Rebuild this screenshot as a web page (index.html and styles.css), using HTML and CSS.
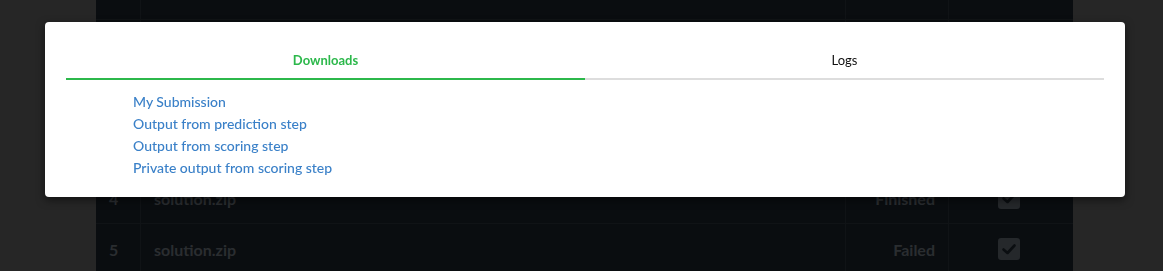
FILE: index.html
```html
<!DOCTYPE html>
<html>
<head>
<meta charset="utf-8">
<link rel="stylesheet" href="styles.css">
</head>
<body>
<div class="backdrop">
  <div class="table">
    <div class="row"><div class="c num"></div><div class="c name"></div><div class="c status"></div><div class="c chk"></div></div>
    <div class="row"><div class="c num">1</div><div class="c name">solution.zip</div><div class="c status">Finished</div><div class="c chk"><span class="box"></span></div></div>
    <div class="row"><div class="c num">2</div><div class="c name">solution.zip</div><div class="c status">Finished</div><div class="c chk"><span class="box"></span></div></div>
    <div class="row"><div class="c num">3</div><div class="c name">solution.zip</div><div class="c status">Finished</div><div class="c chk"><span class="box"></span></div></div>
    <div class="row"><div class="c num">4</div><div class="c name">solution.zip</div><div class="c status">Finished</div><div class="c chk"><span class="box"><svg viewBox="0 0 22 22" width="22" height="22"><path d="M5.5 11.5 L9.5 15 L16.5 7.5" fill="none" stroke="#0b0e11" stroke-width="2.6" stroke-linecap="round" stroke-linejoin="round"/></svg></span></div></div>
    <div class="row"><div class="c num">5</div><div class="c name">solution.zip</div><div class="c status">Failed</div><div class="c chk"><span class="box"><svg viewBox="0 0 22 22" width="22" height="22"><path d="M5.5 11.5 L9.5 15 L16.5 7.5" fill="none" stroke="#0b0e11" stroke-width="2.6" stroke-linecap="round" stroke-linejoin="round"/></svg></span></div></div>
  </div>
</div>
<div class="modal">
  <div class="tabs">
    <div class="tab active">Downloads</div>
    <div class="tab">Logs</div>
  </div>
  <ul class="links">
    <li><a href="#">My Submission</a></li>
    <li><a href="#">Output from prediction step</a></li>
    <li><a href="#">Output from scoring step</a></li>
    <li><a href="#">Private output from scoring step</a></li>
  </ul>
</div>
</body>
</html>
```
FILE: styles.css
```css
html, body {
  margin: 0;
  padding: 0;
  height: 100%;
  overflow: hidden;
  background: #262626;
  font-family: Lato, "Noto Sans", sans-serif;
}
.backdrop {
  display: flow-root;
  width: 977px;
  margin: 0 0 0 96px;
  background: #0a0d10;
  height: 100%;
}
.table {
  display: flex;
  flex-direction: column;
  margin-top: -32px;
}
.row {
  display: grid;
  grid-template-columns: 44px 705px 103px 125px;
  height: 51px;
  flex: none;
  border-top: 1px solid #101316;
  box-sizing: border-box;
  color: #2a2d30;
  font-weight: 700;
  font-size: 16px;
}
.c {
  display: flex;
  align-items: center;
  border-left: 1px solid #101316;
}
.c.num { border-left: none; padding-left: 13px; }
.c.name { padding-left: 13px; }
.c.status { justify-content: flex-end; padding-right: 13px; }
.c.chk { padding-left: 49px; }
.box {
  display: block;
  width: 22px;
  height: 22px;
  border-radius: 3px;
  background: #25282b;
}
.box svg { display: block; }
.modal {
  position: fixed;
  left: 45px;
  top: 22px;
  width: 1080px;
  box-sizing: border-box;
  background: #fff;
  border-radius: 4px;
  box-shadow: 0 3px 8px rgba(0,0,0,0.5);
  padding: 18px 21px 18px;
}
.tabs {
  display: flex;
}
.tab {
  flex: 1;
  text-align: center;
  padding: 10px 0 8px;
  line-height: 20px;
  font-size: 13px;
  color: #111;
  border-bottom: 2px solid #dddddd;
}
.tab.active {
  color: #2cb84b;
  font-weight: 700;
  border-bottom-color: #2cb84b;
}
.links {
  list-style: none;
  margin: 11px 0 0;
  padding: 0 0 0 67px;
}
.links li {
  height: 22px;
  line-height: 22px;
  font-size: 14px;
}
.links a {
  display: inline-block;
  vertical-align: top;
  height: 22px;
  color: #3a80c8;
  text-decoration: none;
  font-weight: 500;
}
```
